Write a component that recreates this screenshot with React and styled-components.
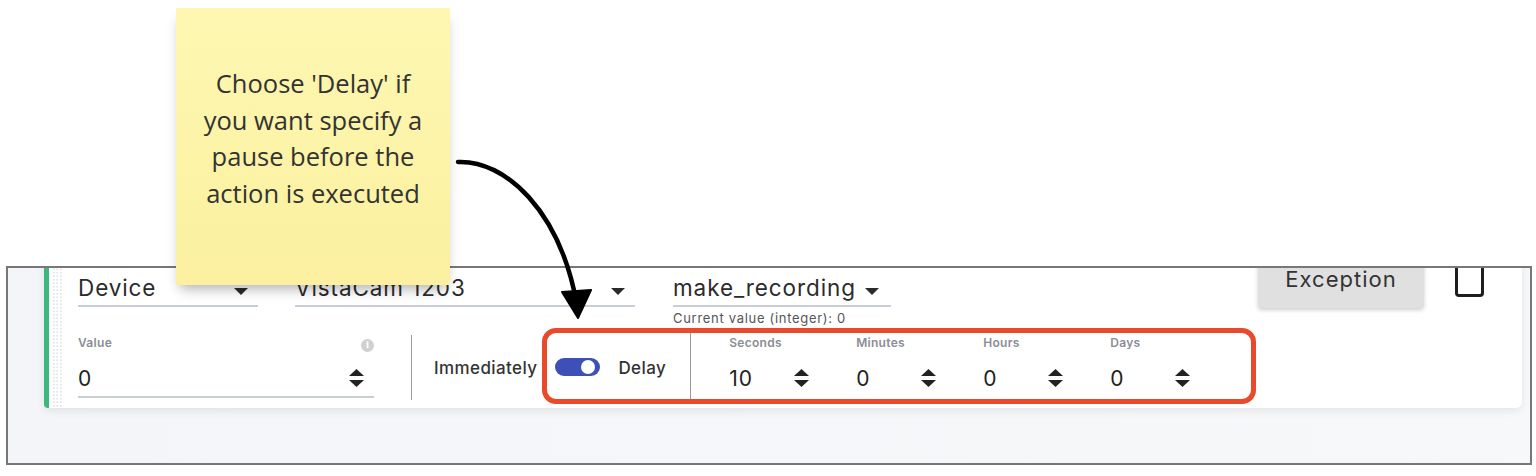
import React from 'react';
import styled, { createGlobalStyle } from 'styled-components';

const GlobalStyle = createGlobalStyle`
  html, body {
    margin: 0;
    padding: 0;
    background: #ffffff;
  }
  body {
    font-family: 'Inter', 'Liberation Sans', sans-serif;
    color: #333;
  }
`;

const Page = styled.div`
  position: relative;
  width: 1536px;
  height: 476px;
  overflow: hidden;
  background: #fff;
`;

const TopSpace = styled.div`
  height: 266px;
`;

const Frame = styled.div`
  margin-left: 6px;
  width: 1522px;
  height: 195px;
  border: 2px solid #777;
  background: linear-gradient(90deg, #f3f5f8 0%, #f7f8fa 100%);
  overflow: hidden;
`;

const Card = styled.div`
  margin: -18px 0 0 36px;
  width: 1478px;
  display: flex;
  background: #fff;
  border-radius: 6px;
  box-shadow: 0 3px 8px rgba(0, 0, 0, 0.08);
`;

const Accent = styled.div`
  width: 5px;
  background: #3fb67a;
  border-radius: 4px 0 0 4px;
  flex-shrink: 0;
`;

const Dots = styled.div`
  width: 11px;
  margin-left: 3px;
  flex-shrink: 0;
  background-image: radial-gradient(circle, #e2e4e8 1px, transparent 1.2px);
  background-size: 3.5px 3.5px;
`;

const Body = styled.div`
  flex: 1;
  padding: 0 38px 4px 15px;
  display: flex;
  flex-direction: column;
`;

const TopRow = styled.div`
  height: 78px;
  display: flex;
  align-items: flex-start;
`;

const SelectWrap = styled.div`
  margin-top: 22px;
  margin-right: ${p => p.$gap || 0}px;
  width: ${p => p.$w}px;
  display: flex;
  flex-direction: column;
`;

const SelectBox = styled.div`
  display: flex;
  align-items: center;
  justify-content: space-between;
  height: 31px;
  padding-bottom: 2px;
  border-bottom: 2px solid #c9cdd5;
  font-size: 22.5px;
  color: #2b2b2b;
  letter-spacing: 0.9px;
`;

const Helper = styled.div`
  margin-top: 4px;
  font-size: 13px;
  line-height: 14px;
  letter-spacing: 0.7px;
  color: #555;
`;

const Spacer = styled.div`
  flex: 1;
`;

const ExceptionButton = styled.div`
  margin-top: 0;
  width: 166px;
  height: 58px;
  display: flex;
  align-items: center;
  justify-content: center;
  background: #e0e0e0;
  border-radius: 4px;
  box-shadow: 0 2px 4px rgba(0, 0, 0, 0.2);
  font-size: 22px;
  color: #333;
  letter-spacing: 1px;
`;

const Checkbox = styled.div`
  margin: 12px 0 0 31px;
  width: 29px;
  height: 35px;
  box-sizing: border-box;
  border: 3.5px solid #1e1e1e;
  border-radius: 4px;
`;

const BottomRow = styled.div`
  height: 76px;
  display: flex;
  align-items: stretch;
`;

const ValueField = styled.div`
  width: 296px;
  padding-top: 8px;
  border-bottom: 2px solid #c9cdd5;
  margin-bottom: 6px;
  display: flex;
  flex-direction: column;
  box-sizing: border-box;
`;

const LabelLine = styled.div`
  display: flex;
  justify-content: space-between;
  align-items: flex-start;
  height: 14px;
`;

const Label = styled.div`
  font-size: 12px;
  line-height: 14px;
  font-weight: 600;
  letter-spacing: 0.3px;
  color: #8a8d93;
`;

const ValueLine = styled.div`
  margin-top: 16px;
  height: 24px;
  display: flex;
  align-items: center;
  justify-content: space-between;
  font-size: 21px;
  letter-spacing: 1px;
  color: #222;
  padding-right: ${p => p.$pr || 0}px;
`;

const Divider = styled.div`
  width: 1px;
  background: #9a9a9a;
  margin: ${p => p.$m};
`;

const Choice = styled.div`
  display: flex;
  align-items: center;
  padding-top: 4px;
  font-size: 17px;
  letter-spacing: 0.4px;
  color: #333;
  font-weight: 500;
`;

const Highlight = styled.div`
  margin-left: 5px;
  width: 714px;
  box-sizing: border-box;
  border: 5px solid #ea4a2c;
  border-radius: 14px;
  display: flex;
  align-items: stretch;
  padding-left: 8px;
`;

const Toggle = styled.div`
  width: 45px;
  height: 18px;
  border-radius: 9px;
  background: #3e4fb8;
  position: relative;
  align-self: center;
  margin: 2px 18px 0 0;
  flex-shrink: 0;
  &::after {
    content: '';
    position: absolute;
    right: 5px;
    top: 2px;
    width: 14px;
    height: 14px;
    border-radius: 50%;
    background: #fff;
  }
`;

const TimeField = styled.div`
  width: 100px;
  margin-right: 27px;
  padding-top: 3px;
  display: flex;
  flex-direction: column;
`;

const InfoDot = styled.div`
  margin-top: 3px;
  width: 13px;
  height: 13px;
  border-radius: 50%;
  background: #d0d0d0;
  color: #fff;
  font-size: 9px;
  font-weight: 700;
  line-height: 13px;
  text-align: center;
  font-family: 'DejaVu Serif', serif;
`;

const Note = styled.div`
  position: absolute;
  left: 176px;
  top: 8px;
  width: 274px;
  height: 277px;
  box-sizing: border-box;
  padding-top: 57px;
  background: linear-gradient(180deg, #fdf7b2 0%, #fcf3a6 60%, #fbf0a0 100%);
  box-shadow: 0 8px 12px -4px rgba(0, 0, 0, 0.3);
  font-family: 'Open Sans', sans-serif;
  font-size: 25.5px;
  line-height: 36.5px;
  color: #333;
  text-align: center;
`;

const ArrowSvg = styled.svg`
  position: absolute;
  left: 440px;
  top: 140px;
`;

const Caret = () => (
  <svg width="14" height="8" viewBox="0 0 14 8">
    <path d="M0 0 L14 0 L7 7 Z" fill="#2b2b2b" />
  </svg>
);

const Spin = () => (
  <svg width="15" height="19" viewBox="0 0 15 19">
    <path d="M7.5 0 L15 7 L0 7 Z" fill="#222" />
    <path d="M0 11 L15 11 L7.5 18 Z" fill="#222" />
  </svg>
);

const times = [
  { label: 'Seconds', value: '10' },
  { label: 'Minutes', value: '0' },
  { label: 'Hours', value: '0' },
  { label: 'Days', value: '0' },
];

export default function App() {
  return (
    <Page>
      <GlobalStyle />
      <TopSpace />
      <Frame>
        <Card>
          <Accent />
          <Dots />
          <Body>
            <TopRow>
              <SelectWrap $w={180} $gap={37}>
                <SelectBox>
                  Device
                  <span style={{ marginRight: 10 }}><Caret /></span>
                </SelectBox>
              </SelectWrap>
              <SelectWrap $w={340} $gap={38}>
                <SelectBox>
                  VistaCam 1203
                  <span style={{ marginRight: 10 }}><Caret /></span>
                </SelectBox>
              </SelectWrap>
              <SelectWrap $w={218}>
                <SelectBox>
                  make_recording
                  <span style={{ marginRight: 12 }}><Caret /></span>
                </SelectBox>
                <Helper>Current value (integer): 0</Helper>
              </SelectWrap>
              <Spacer />
              <ExceptionButton>Exception</ExceptionButton>
              <Checkbox />
            </TopRow>
            <BottomRow>
              <ValueField>
                <LabelLine>
                  <Label>Value</Label>
                  <InfoDot>i</InfoDot>
                </LabelLine>
                <ValueLine $pr={10}>
                  0
                  <Spin />
                </ValueLine>
              </ValueField>
              <Divider $m="7px 22px 4px 37px" />
              <Choice>Immediately</Choice>
              <Highlight>
                <Toggle />
                <Choice>Delay</Choice>
                <Divider $m="0 38px 0 24px" />
                {times.map(t => (
                  <TimeField key={t.label}>
                    <Label>{t.label}</Label>
                    <ValueLine $pr={20}>
                      {t.value}
                      <Spin />
                    </ValueLine>
                  </TimeField>
                ))}
              </Highlight>
            </BottomRow>
          </Body>
        </Card>
      </Frame>
      <Note>
        Choose 'Delay' if<br />
        you want specify a<br />
        pause before the<br />
        action is executed
      </Note>
      <ArrowSvg width="170" height="190" viewBox="440 140 170 190">
        <path
          d="M458 162 C 505 160, 560 210, 577 305"
          fill="none"
          stroke="#000"
          strokeWidth="4.5"
          strokeLinecap="round"
        />
        <path d="M562 292 L578 318 L591 290 Z" fill="#000" stroke="#000" strokeWidth="2" strokeLinejoin="round" />
      </ArrowSvg>
    </Page>
  );
}
